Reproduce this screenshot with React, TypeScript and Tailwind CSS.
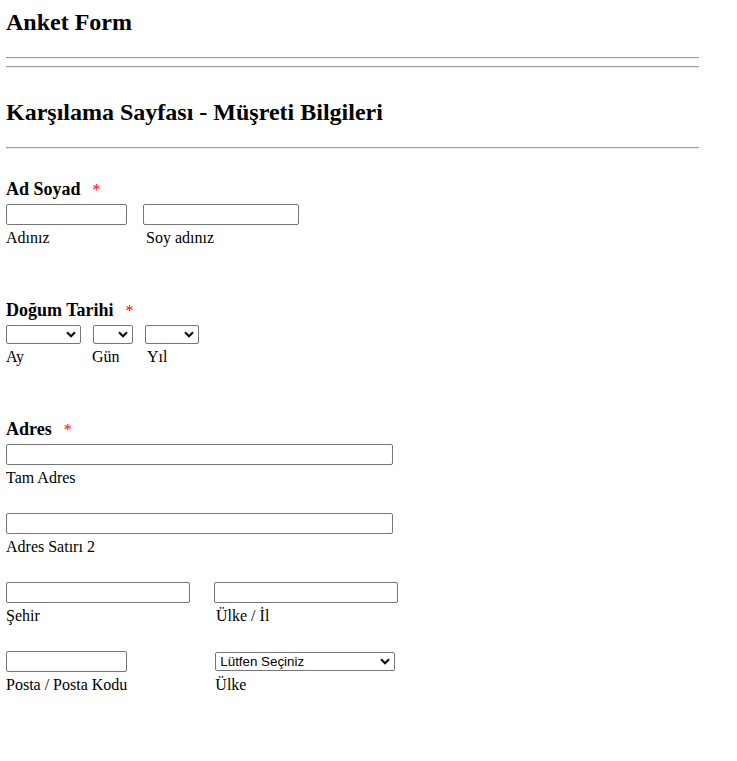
import React from "react";

const serif = { fontFamily: '"Liberation Serif", "Times New Roman", serif' };

function Rule({ className = "" }: { className?: string }) {
  return <div className={`h-0 w-[693px] border-t border-b border-t-[#9a9a9a] border-b-[#eeeeee] ${className}`} />;
}

function Heading({ text, className = "" }: { text: string; className?: string }) {
  return (
    <h3 className={`block h-[22px] text-[18px] font-bold leading-[22px] ${className}`}>
      {text}
      <span className="ml-[12px] text-[16px] font-normal text-[#ff0000]">*</span>
    </h3>
  );
}

function TextBox({ w }: { w: string }) {
  return <input type="text" className={`block h-[21px] ${w} rounded-[2px] border border-[#767676] bg-white px-[2px] text-[13px] outline-none`} />;
}

function Chevron() {
  return (
    <svg width="10" height="7" viewBox="0 0 10 7" className="pointer-events-none absolute right-[5px] top-[6px]">
      <path d="M1 1.2l4 4 4-4" fill="none" stroke="#111" strokeWidth="2.2" />
    </svg>
  );
}

function Select({ w, label }: { w: string; label?: string }) {
  return (
    <div className={`relative h-[19px] ${w}`}>
      <select
        className="block h-[19px] w-full appearance-none rounded-[2px] border border-[#767676] bg-white pl-[4px] text-[13.33px] leading-[17px] text-black outline-none"
        style={{ fontFamily: '"Liberation Sans", Arial, sans-serif' }}
      >
        <option>{label ?? ""}</option>
      </select>
      <Chevron />
    </div>
  );
}

function Caption({ text, className = "" }: { text: string; className?: string }) {
  return <div className={`h-[18px] text-[16px] leading-[18px] ${className}`}>{text}</div>;
}

export default function App() {
  return (
    <div className="min-h-[761px] w-[737px] bg-white pl-[6px] pt-[8px] text-black" style={serif}>
      <h2 className="h-[28px] text-[24px] font-bold leading-[28px]">Anket Form</h2>
      <Rule className="mt-[21px]" />
      <Rule className="mt-[7px]" />
      <h2 className="mt-[30px] h-[28px] text-[24px] font-bold leading-[28px]">Karşılama Sayfası - Müşreti Bilgileri</h2>
      <Rule className="mt-[21px]" />

      {/* Ad Soyad */}
      <Heading text="Ad Soyad" className="mt-[29px]" />
      <div className="mt-[4px] flex items-start gap-[16px]">
        <div className="flex flex-col">
          <TextBox w="w-[121px]" />
          <Caption text="Adınız" className="mt-[4px]" />
        </div>
        <div className="flex flex-col">
          <TextBox w="w-[156px]" />
          <Caption text="Soy adınız" className="mt-[4px] pl-[3px]" />
        </div>
      </div>

      {/* Doğum Tarihi */}
      <Heading text="Doğum Tarihi" className="mt-[52px]" />
      <div className="mt-[4px] flex items-start gap-[12px]">
        <div className="flex flex-col">
          <Select w="w-[75px]" />
          <Caption text="Ay" className="mt-[4px]" />
        </div>
        <div className="flex flex-col">
          <Select w="w-[40px]" />
          <Caption text="Gün" className="mt-[4px] -ml-[1px]" />
        </div>
        <div className="flex flex-col">
          <Select w="w-[54px]" />
          <Caption text="Yıl" className="mt-[4px] pl-[2px]" />
        </div>
      </div>

      {/* Adres */}
      <Heading text="Adres" className="mt-[52px]" />
      <div className="mt-[4px] flex flex-col">
        <TextBox w="w-[387px]" />
        <Caption text="Tam Adres" className="mt-[4px]" />
      </div>
      <div className="mt-[26px] flex flex-col">
        <TextBox w="w-[387px]" />
        <Caption text="Adres Satırı 2" className="mt-[4px]" />
      </div>
      <div className="mt-[26px] flex items-start gap-[24px]">
        <div className="flex flex-col">
          <TextBox w="w-[184px]" />
          <Caption text="Şehir" className="mt-[4px]" />
        </div>
        <div className="flex flex-col">
          <TextBox w="w-[184px]" />
          <Caption text="Ülke / İl" className="mt-[4px] pl-[2px]" />
        </div>
      </div>
      <div className="mt-[26px] flex items-start gap-[88px]">
        <div className="flex flex-col">
          <TextBox w="w-[121px]" />
          <Caption text="Posta / Posta Kodu" className="mt-[4px]" />
        </div>
        <div className="flex flex-col pt-[1px]">
          <Select w="w-[180px]" label="Lütfen Seçiniz" />
          <Caption text="Ülke" className="mt-[5px]" />
        </div>
      </div>
    </div>
  );
}
